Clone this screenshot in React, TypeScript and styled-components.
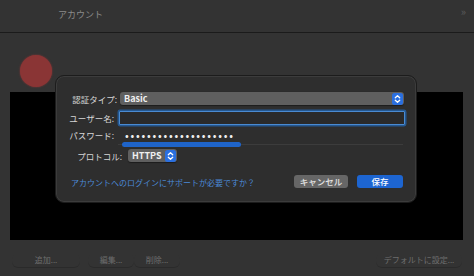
import React from "react";
import styled, { createGlobalStyle } from "styled-components";

const GlobalStyle = createGlobalStyle`
	html, body {
		margin: 0;
		padding: 0;
		background: #333333;
	}
	body {
		font-family: "Noto Sans CJK JP", "Noto Sans", sans-serif;
	}
`;

const Window = styled.div`
	position: relative;
	width: 474px;
	height: 276px;
	background: #333333;
	display: flex;
	flex-direction: column;
	overflow: hidden;
`;

const Header = styled.div`
	height: 33px;
	border-bottom: 1px solid #1b1b1b;
	display: flex;
	align-items: center;
	padding: 0 8px 4px 58px;
	box-sizing: border-box;
`;

const Title = styled.span`
	font-size: 9px;
	color: #8a8a8a;
	flex: 1;
`;

const Chevrons = styled.span`
	font-size: 11px;
	color: #5c5c5c;
	margin-top: -6px;
`;

const AvatarRow = styled.div`
	height: 59px;
	display: flex;
	align-items: flex-end;
	padding: 0 0 5px 20px;
	box-sizing: border-box;
`;

const Avatar = styled.div`
	width: 32px;
	height: 32px;
	border-radius: 50%;
	background: #8a3535;
	box-shadow: 0 0 2px #8a3535;
`;

const ListPanel = styled.div`
	height: 148px;
	margin: 0 11px 0 10px;
	background: #000;
`;

const Footer = styled.div`
	height: 35px;
	display: flex;
	align-items: flex-start;
	padding: 13px 12px 0 12px;
	box-sizing: border-box;
`;

const FootButton = styled.button<{ $w: number; $ml?: number }>`
	width: ${(p) => p.$w}px;
	margin-left: ${(p) => p.$ml ?? 0}px;
	height: 14px;
	padding: 0;
	border: none;
	border-radius: 6px;
	background: transparent;
	box-shadow: 0 1px 0 rgba(0, 0, 0, 0.16);
	font-family: inherit;
	font-size: 8px;
	line-height: 14px;
	color: #6e6e6e;
`;

const Spacer = styled.div`
	flex: 1;
`;

const Dialog = styled.div`
	position: absolute;
	left: 55px;
	top: 75px;
	width: 362px;
	height: 128px;
	box-sizing: border-box;
	background: #2e2e2e;
	border: 1px solid #1c1c1c;
	border-radius: 9px;
	box-shadow: inset 0 0 0 1px rgba(255, 255, 255, 0.07);
	padding-top: 16px;
	display: flex;
	flex-direction: column;
`;

const Row = styled.div<{ $h: number; $mt?: number }>`
	display: flex;
	align-items: center;
	height: ${(p) => p.$h}px;
	margin-top: ${(p) => p.$mt ?? 0}px;
`;

const Label = styled.span<{ $w: number; $gap: number }>`
	width: ${(p) => p.$w}px;
	margin-right: ${(p) => p.$gap}px;
	text-align: right;
	font-size: 8.5px;
	color: #d6d6d6;
	white-space: nowrap;
`;

const Popup = styled.div<{ $w: number }>`
	width: ${(p) => p.$w}px;
	height: 13px;
	box-sizing: border-box;
	display: flex;
	align-items: center;
	justify-content: space-between;
	padding: 0 1px 0 4px;
	background: #5f5f5f;
	border-radius: 3px;
	box-shadow: 0 0.5px 1px rgba(0, 0, 0, 0.4);
	font-size: 9px;
	font-weight: 700;
	color: #f0f0f0;
`;

const TextField = styled.div`
	width: 286px;
	height: 14px;
	box-sizing: border-box;
	background: #2a2a2a;
	border: 1px solid #4a8ad0;
	box-shadow: 0 0 0 1.5px #24578f;
	border-radius: 1px;
`;

const Dots = styled.span`
	font-size: 11px;
	letter-spacing: 1.75px;
	color: #ececec;
	line-height: 1;
`;

const BarRow = styled.div`
	height: 6px;
	margin: 1px 0 0 0;
	padding-left: 66px;
	margin-right: 13px;
	background: linear-gradient(#3c3c3c, #3c3c3c) no-repeat 62px 2px / calc(100% - 62px) 1px;
`;

const Bar = styled.div`
	width: 119px;
	height: 5px;
	border-radius: 3px;
	background: #1f64c9;
`;

const DialogFooter = styled.div`
	display: flex;
	align-items: center;
	margin-top: 13px;
	padding: 0 13px 0 15px;
`;

const HelpLink = styled.span`
	flex: 1;
	font-size: 8px;
	color: #4b8ad6;
	margin-top: 1px;
`;

const PushButton = styled.button<{ $primary?: boolean; $w: number }>`
	width: ${(p) => p.$w}px;
	height: 13px;
	margin-left: 9px;
	padding: 0;
	border: none;
	border-radius: 3px;
	background: ${(p) => (p.$primary ? "#1d65d1" : "#666666")};
	color: ${(p) => (p.$primary ? "#ffffff" : "#e4e4e4")};
	font-family: inherit;
	font-size: 8.5px;
	font-weight: 500;
	line-height: 13px;
`;

const Stepper = () => (
	<svg width="11" height="12" viewBox="0 0 11 12">
		<rect x="0" y="0" width="11" height="12" rx="2.5" fill="#2a6fe0" />
		<path
			d="M3.3 4.8 L5.5 2.8 L7.7 4.8 M3.3 7.2 L5.5 9.2 L7.7 7.2"
			fill="none"
			stroke="#ffffff"
			strokeWidth="1.3"
			strokeLinecap="round"
			strokeLinejoin="round"
		/>
	</svg>
);

const App = () => {
	return (
		<>
			<GlobalStyle />
			<Window>
				<Header>
					<Title>アカウント</Title>
					<Chevrons>»</Chevrons>
				</Header>
				<AvatarRow>
					<Avatar />
				</AvatarRow>
				<ListPanel />
				<Footer>
					<FootButton $w={68}>追加...</FootButton>
					<FootButton $w={46} $ml={8}>編集...</FootButton>
					<FootButton $w={46}>削除...</FootButton>
					<Spacer />
					<FootButton $w={86}>デフォルトに設定...</FootButton>
				</Footer>

				<Dialog>
					<Row $h={13}>
						<Label $w={61} $gap={3}>認証タイプ:</Label>
						<Popup $w={284}>
							<span>Basic</span>
							<Stepper />
						</Popup>
					</Row>
					<Row $h={15} $mt={5}>
						<Label $w={58} $gap={5}>ユーザー名:</Label>
						<TextField />
					</Row>
					<Row $h={12} $mt={4}>
						<Label $w={58} $gap={11}>パスワード:</Label>
						<Dots>••••••••••••••••••••</Dots>
					</Row>
					<BarRow>
						<Bar />
					</BarRow>
					<Row $h={13} $mt={1}>
						<Label $w={66} $gap={6}>プロトコル:</Label>
						<Popup $w={49}>
							<span>HTTPS</span>
							<Stepper />
						</Popup>
					</Row>
					<DialogFooter>
						<HelpLink>アカウントへのログインにサポートが必要ですか？</HelpLink>
						<PushButton $w={54}>キャンセル</PushButton>
						<PushButton $w={46} $primary>
							保存
						</PushButton>
					</DialogFooter>
				</Dialog>
			</Window>
		</>
	);
};

export default App;
